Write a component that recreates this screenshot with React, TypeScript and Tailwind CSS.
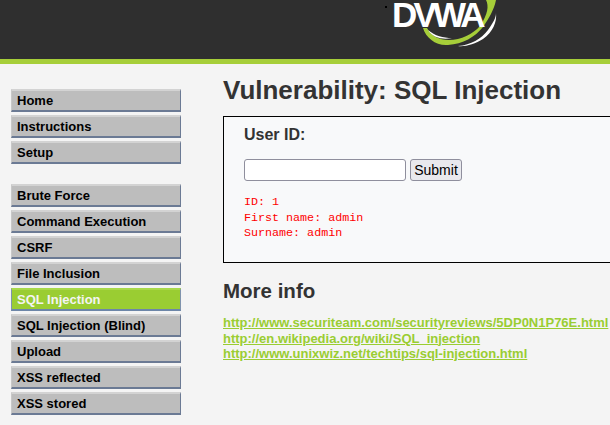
const topMenu = ["Home", "Instructions", "Setup"];
const vulnMenu = [
  "Brute Force",
  "Command Execution",
  "CSRF",
  "File Inclusion",
  "SQL Injection",
  "SQL Injection (Blind)",
  "Upload",
  "XSS reflected",
  "XSS stored",
];
const links = [
  "http://www.securiteam.com/securityreviews/5DP0N1P76E.html",
  "http://en.wikipedia.org/wiki/SQL_injection",
  "http://www.unixwiz.net/techtips/sql-injection.html",
];

function MenuItem({ label }: { label: string }) {
  const selected = label === "SQL Injection";
  return (
    <li
      className={`h-[23px] pl-[5px] border-t-2 border-b-2 border-r border-l leading-[19px] text-[13px] font-bold ${
        selected
          ? "bg-[#9acd32] text-[#f4f4f4] border-t-[#a9d94a] border-b-[#6d86a8] border-x-[#7f93ad]"
          : "bg-[#bdbdbd] text-black border-t-[#d3d3d3] border-b-[#6b7a94] border-l-[#c8c8c8] border-r-[#6b7a94]"
      }`}
    >
      {label}
    </li>
  );
}

function Logo() {
  return (
    <div className="absolute left-[393px] top-0 h-[59px] w-[110px]">
      <svg className="absolute left-0 top-0" width="110" height="59" viewBox="0 0 110 59">
        <path d="M30 28C33 38 43 46 55 45C70 44 82 37 90 27C96 18 101 10 103 0L93 0C96 6 95 14 87 26C80 34 68 40 56 40C46 40 38 36 34 28Z" fill="#a6ce39" />
        <path d="M35 30C42 36 50 38 59 38C50 40 40 38 35 30Z" fill="#ffffff" />
        <path d="M65 46C78 45 88 39 95 30C100 23 103 18 103 13C104 22 100 32 90 39C82 44 72 47 65 46Z" fill="#ffffff" />
      </svg>
      <span className="absolute left-[-1px] top-0 font-['Liberation_Sans',sans-serif] text-[35px] leading-[29px] font-bold tracking-[-3.8px] text-white">
        DVWA
      </span>
    </div>
  );
}

export default function App() {
  return (
    <div className="relative h-[425px] w-[610px] overflow-hidden bg-[#f4f4f4] font-['Liberation_Sans',Arial,sans-serif] text-[#222]">
      <header className="h-[64px] bg-[#2f2f2f] border-b-[5px] border-[#a6ce39]">
        <span className="absolute left-[385px] top-[6px] h-[2px] w-[2px] bg-black" />
        <Logo />
      </header>

      <div className="flex">
        <nav className="w-[212px] shrink-0 pl-[11px] pr-[31px] pt-[25px]">
          <ul className="flex flex-col gap-[3px]">
            {topMenu.map((m) => (
              <MenuItem key={m} label={m} />
            ))}
          </ul>
          <ul className="mt-[20px] flex flex-col gap-[3px]">
            {vulnMenu.map((m) => (
              <MenuItem key={m} label={m} />
            ))}
          </ul>
        </nav>

        <main className="w-[420px] shrink-0 pl-[11px] pt-[11px]">
          <h1 className="text-[26px] leading-[30px] font-bold text-[#333]">Vulnerability: SQL Injection</h1>

          <div className="mt-[11px] h-[147px] border border-black bg-[#f8f9fa] pl-[20px] pt-[9px]">
            <h3 className="text-[16px] leading-[18px] font-bold text-[#333]">User ID:</h3>
            <form className="mt-[15px] flex items-center gap-[4px]">
              <input
                type="text"
                className="h-[22px] w-[162px] rounded-[3px] border border-[#8f8f9d] bg-white"
              />
              <button
                type="button"
                className="h-[22px] w-[52px] rounded-[3px] border border-[#8f8f9d] bg-[#e9e9ed] text-[14px] leading-[20px] text-black"
              >
                Submit
              </button>
            </form>
            <pre className="mt-[14px] font-['Liberation_Mono',monospace] text-[11.7px] leading-[15.5px] text-[#ff0000]">
              {"ID: 1\nFirst name: admin\nSurname: admin"}
            </pre>
          </div>

          <h2 className="mt-[15px] text-[20.5px] leading-[26px] font-bold text-[#333]">More info</h2>
          <ul className="mt-[11px]">
            {links.map((l) => (
              <li key={l} className="text-[13px] leading-[15.5px] font-bold whitespace-nowrap">
                <a href="#" className="text-[#9acd32] underline">
                  {l}
                </a>
              </li>
            ))}
          </ul>
        </main>
      </div>
    </div>
  );
}
